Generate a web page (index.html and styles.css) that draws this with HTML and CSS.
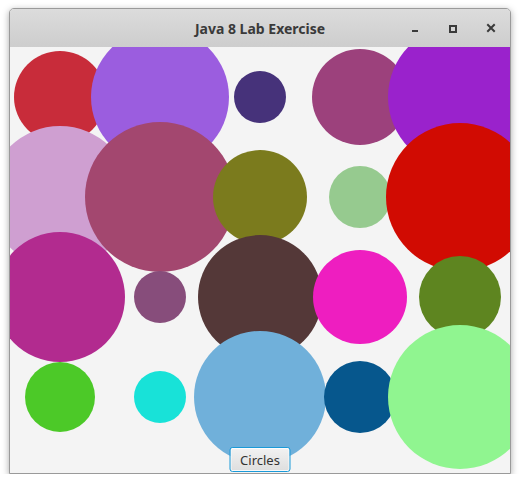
FILE: index.html
```html
<!DOCTYPE html>
<html lang="en">
<head>
    <meta charset="UTF-8">
    <meta name="viewport" content="width=device-width, initial-scale=1.0">
    <title>Java 8 Lab Exercise</title>
    <link rel="stylesheet" href="styles.css">
</head>
<body>
    <div class="window">
        <div class="titlebar">
            <div></div>
            <div class="title">Java 8 Lab Exercise</div>
            <div class="controls">
                <svg class="control" width="38" height="38" viewBox="0 0 38 38" aria-label="Minimize">
                    <rect x="16" y="21" width="6" height="2" fill="#3a3a3a"/>
                </svg>
                <svg class="control" width="38" height="38" viewBox="0 0 38 38" aria-label="Maximize">
                    <rect x="16" y="17" width="6" height="6" fill="none" stroke="#3a3a3a" stroke-width="2"/>
                </svg>
                <svg class="control" width="38" height="38" viewBox="0 0 38 38" aria-label="Close">
                    <path d="M16 16 L22 22 M22 16 L16 22" stroke="#3a3a3a" stroke-width="2" stroke-linecap="square"/>
                </svg>
            </div>
        </div>
        <div class="scene">
            <svg class="canvas" width="500" height="426" viewBox="0 0 500 426">
                <!-- row 1 -->
                <circle cx="50" cy="50" r="46" fill="#c82c3a"/>
                <circle cx="150" cy="50" r="69" fill="#9b5ddf"/>
                <circle cx="250" cy="50" r="26" fill="#46327a"/>
                <circle cx="350" cy="50" r="48" fill="#9c417c"/>
                <circle cx="450" cy="50" r="72" fill="#9a22cc"/>
                <!-- row 2 -->
                <circle cx="50" cy="150" r="71" fill="#cf9fd1"/>
                <circle cx="150" cy="150" r="75" fill="#a3476f"/>
                <circle cx="250" cy="150" r="47" fill="#7b7b1d"/>
                <circle cx="350" cy="150" r="31" fill="#96ca8f"/>
                <circle cx="450" cy="150" r="74" fill="#d10b02"/>
                <!-- row 3 -->
                <circle cx="50" cy="250" r="65" fill="#b22b8f"/>
                <circle cx="150" cy="250" r="26" fill="#874d7b"/>
                <circle cx="250" cy="250" r="62" fill="#543838"/>
                <circle cx="350" cy="250" r="47" fill="#ee1ec0"/>
                <circle cx="450" cy="250" r="41" fill="#5e8520"/>
                <!-- row 4 -->
                <circle cx="50" cy="350" r="35" fill="#4cc928"/>
                <circle cx="150" cy="350" r="26" fill="#18e2d8"/>
                <circle cx="250" cy="350" r="66" fill="#70b0da"/>
                <circle cx="350" cy="350" r="36" fill="#06578d"/>
                <circle cx="450" cy="350" r="72" fill="#90f590"/>
            </svg>
            <button class="fx-button">Circles</button>
        </div>
    </div>
</body>
</html>
```

FILE: styles.css
```css
* {
    box-sizing: border-box;
    margin: 0;
    padding: 0;
}

body {
    font-family: "Noto Sans", "DejaVu Sans", sans-serif;
    background-color: #ffffff;
    padding: 8px 0 0 9px;
}

.window {
    width: 502px;
    border: 1px solid #9a9a9a;
    border-radius: 5px 5px 0 0;
    background-color: #f4f4f4;
    box-shadow: 0 2px 7px rgba(0, 0, 0, 0.35);
    overflow: hidden;
}

.titlebar {
    display: grid;
    grid-template-columns: 1fr auto 1fr;
    align-items: center;
    height: 38px;
    background: linear-gradient(#dcdcdc, #cdcdcd);
}

.title {
    font-size: 14px;
    font-weight: bold;
    color: #3a3a3a;
}

.controls {
    display: flex;
    justify-content: flex-end;
}

.control {
    display: block;
}

.scene {
    position: relative;
    height: 426px;
    overflow: hidden;
}

.canvas {
    display: block;
}

.fx-button {
    position: absolute;
    bottom: 1px;
    left: 50%;
    transform: translateX(-50%);
    width: 61px;
    height: 25px;
    font-family: "Noto Sans", "DejaVu Sans", sans-serif;
    font-size: 13px;
    color: #333333;
    background: linear-gradient(#f2f2f2, #dedede);
    border: 1px solid #1a9ad8;
    border-radius: 3px;
    box-shadow: inset 0 0 0 1px rgba(255, 255, 255, 0.8);
}
```
